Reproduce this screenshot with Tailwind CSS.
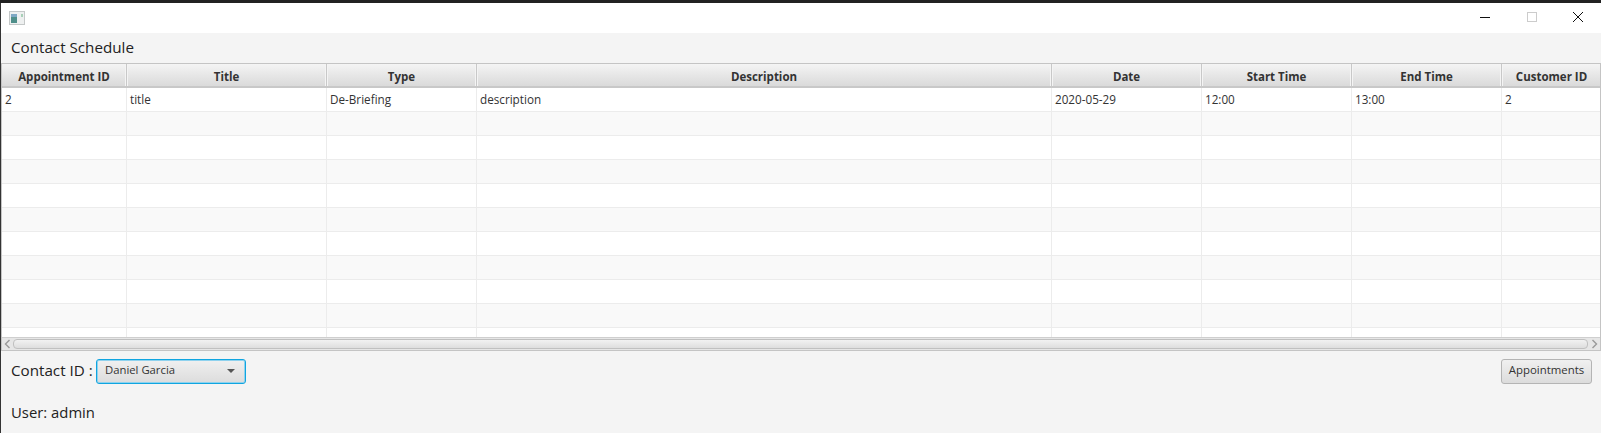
<!DOCTYPE html>
<html>
<head>
<meta charset="utf-8">
<script src="https://cdn.jsdelivr.net/npm/@tailwindcss/browser@4"></script>
</head>
<body class="w-[1601px] h-[433px] overflow-hidden bg-[#f4f4f4] font-['Open_Sans','Noto_Sans',sans-serif] text-[#333]">
<div class="h-[3px] bg-[#222]"></div>
<div class="border-l border-[#333] h-[430px] flex flex-col">
  <!-- title bar -->
  <div class="h-[30px] bg-white flex items-center justify-between shrink-0">
    <svg class="ml-[8px] w-[16px] h-[14px]" viewBox="0 0 16 14">
      <rect x="0.5" y="0.5" width="15" height="13" fill="#eef0f0" stroke="#c4c8c8"/>
      <rect x="2" y="3" width="6" height="9" fill="#4f8f8a"/>
      <rect x="2" y="3" width="6" height="3" fill="#7fa8c4"/>
      <rect x="12" y="3" width="2" height="3" fill="#a8d0b8"/>
    </svg>
    <div class="flex items-center">
      <svg class="w-[46px] h-[30px]" viewBox="0 0 46 30"><path d="M18 14.5h10" stroke="#111" stroke-width="1"/></svg>
      <svg class="w-[46px] h-[30px] ml-[1px]" viewBox="0 0 46 30"><rect x="18.5" y="9.5" width="9" height="9" fill="none" stroke="#ccc"/></svg>
      <svg class="w-[46px] h-[30px]" viewBox="0 0 46 30"><path d="M18 9l10 10M28 9l-10 10" stroke="#111" stroke-width="1" fill="none"/></svg>
    </div>
  </div>
  <!-- heading -->
  <div class="h-[30px] flex items-center pb-[2px] pl-[10px] text-[15.2px] text-[#222] shrink-0">Contact Schedule</div>
  <!-- table -->
  <div class="h-[288px] border border-[#c4c4c4] flex flex-col overflow-hidden shrink-0 bg-white">
    <div class="flex h-[24px] shrink-0 border-b-2 border-[#c8c8c8] bg-gradient-to-b from-[#f4f4f4] to-[#dadada] text-[11.5px] font-bold text-[#333]">
      <div class="w-[125px] pt-[3px] border-r border-[#c8c8c8] shadow-[inset_-1px_0_0_#f4f4f4] flex items-center justify-center">Appointment ID</div>
      <div class="w-[200px] pt-[3px] border-r border-[#c8c8c8] shadow-[inset_1px_0_0_#f4f4f4,inset_-1px_0_0_#f4f4f4] flex items-center justify-center">Title</div>
      <div class="w-[150px] pt-[3px] border-r border-[#c8c8c8] shadow-[inset_1px_0_0_#f4f4f4,inset_-1px_0_0_#f4f4f4] flex items-center justify-center">Type</div>
      <div class="w-[575px] pt-[3px] border-r border-[#c8c8c8] shadow-[inset_1px_0_0_#f4f4f4,inset_-1px_0_0_#f4f4f4] flex items-center justify-center">Description</div>
      <div class="w-[150px] pt-[3px] border-r border-[#c8c8c8] shadow-[inset_1px_0_0_#f4f4f4,inset_-1px_0_0_#f4f4f4] flex items-center justify-center">Date</div>
      <div class="w-[150px] pt-[3px] border-r border-[#c8c8c8] shadow-[inset_1px_0_0_#f4f4f4,inset_-1px_0_0_#f4f4f4] flex items-center justify-center">Start Time</div>
      <div class="w-[150px] pt-[3px] border-r border-[#c8c8c8] shadow-[inset_1px_0_0_#f4f4f4,inset_-1px_0_0_#f4f4f4] flex items-center justify-center">End Time</div>
      <div class="flex-1 pt-[3px] pl-[1px] shadow-[inset_1px_0_0_#f4f4f4] flex items-center justify-center">Customer ID</div>
    </div>
    <div class="flex-1 overflow-hidden text-[11.7px] text-[#333]">
      <div class="flex h-[24px] border-b border-[#ececec] bg-white">
        <div class="w-[125px] border-r border-[#ececec] pl-[3px] leading-[23px]">2</div>
        <div class="w-[200px] border-r border-[#ececec] pl-[3px] leading-[23px]">title</div>
        <div class="w-[150px] border-r border-[#ececec] pl-[3px] leading-[23px]">De-Briefing</div>
        <div class="w-[575px] border-r border-[#ececec] pl-[3px] leading-[23px]">description</div>
        <div class="w-[150px] border-r border-[#ececec] pl-[3px] leading-[23px]">2020-05-29</div>
        <div class="w-[150px] border-r border-[#ececec] pl-[3px] leading-[23px]">12:00</div>
        <div class="w-[150px] border-r border-[#ececec] pl-[3px] leading-[23px]">13:00</div>
        <div class="flex-1 pl-[3px] leading-[23px]">2</div>
      </div>
      <div class="flex h-[24px] border-b border-[#ececec] bg-[#f9f9f9]"><div class="w-[125px] border-r border-[#ececec]"></div><div class="w-[200px] border-r border-[#ececec]"></div><div class="w-[150px] border-r border-[#ececec]"></div><div class="w-[575px] border-r border-[#ececec]"></div><div class="w-[150px] border-r border-[#ececec]"></div><div class="w-[150px] border-r border-[#ececec]"></div><div class="w-[150px] border-r border-[#ececec]"></div></div>
      <div class="flex h-[24px] border-b border-[#ececec] bg-white"><div class="w-[125px] border-r border-[#ececec]"></div><div class="w-[200px] border-r border-[#ececec]"></div><div class="w-[150px] border-r border-[#ececec]"></div><div class="w-[575px] border-r border-[#ececec]"></div><div class="w-[150px] border-r border-[#ececec]"></div><div class="w-[150px] border-r border-[#ececec]"></div><div class="w-[150px] border-r border-[#ececec]"></div></div>
      <div class="flex h-[24px] border-b border-[#ececec] bg-[#f9f9f9]"><div class="w-[125px] border-r border-[#ececec]"></div><div class="w-[200px] border-r border-[#ececec]"></div><div class="w-[150px] border-r border-[#ececec]"></div><div class="w-[575px] border-r border-[#ececec]"></div><div class="w-[150px] border-r border-[#ececec]"></div><div class="w-[150px] border-r border-[#ececec]"></div><div class="w-[150px] border-r border-[#ececec]"></div></div>
      <div class="flex h-[24px] border-b border-[#ececec] bg-white"><div class="w-[125px] border-r border-[#ececec]"></div><div class="w-[200px] border-r border-[#ececec]"></div><div class="w-[150px] border-r border-[#ececec]"></div><div class="w-[575px] border-r border-[#ececec]"></div><div class="w-[150px] border-r border-[#ececec]"></div><div class="w-[150px] border-r border-[#ececec]"></div><div class="w-[150px] border-r border-[#ececec]"></div></div>
      <div class="flex h-[24px] border-b border-[#ececec] bg-[#f9f9f9]"><div class="w-[125px] border-r border-[#ececec]"></div><div class="w-[200px] border-r border-[#ececec]"></div><div class="w-[150px] border-r border-[#ececec]"></div><div class="w-[575px] border-r border-[#ececec]"></div><div class="w-[150px] border-r border-[#ececec]"></div><div class="w-[150px] border-r border-[#ececec]"></div><div class="w-[150px] border-r border-[#ececec]"></div></div>
      <div class="flex h-[24px] border-b border-[#ececec] bg-white"><div class="w-[125px] border-r border-[#ececec]"></div><div class="w-[200px] border-r border-[#ececec]"></div><div class="w-[150px] border-r border-[#ececec]"></div><div class="w-[575px] border-r border-[#ececec]"></div><div class="w-[150px] border-r border-[#ececec]"></div><div class="w-[150px] border-r border-[#ececec]"></div><div class="w-[150px] border-r border-[#ececec]"></div></div>
      <div class="flex h-[24px] border-b border-[#ececec] bg-[#f9f9f9]"><div class="w-[125px] border-r border-[#ececec]"></div><div class="w-[200px] border-r border-[#ececec]"></div><div class="w-[150px] border-r border-[#ececec]"></div><div class="w-[575px] border-r border-[#ececec]"></div><div class="w-[150px] border-r border-[#ececec]"></div><div class="w-[150px] border-r border-[#ececec]"></div><div class="w-[150px] border-r border-[#ececec]"></div></div>
      <div class="flex h-[24px] border-b border-[#ececec] bg-white"><div class="w-[125px] border-r border-[#ececec]"></div><div class="w-[200px] border-r border-[#ececec]"></div><div class="w-[150px] border-r border-[#ececec]"></div><div class="w-[575px] border-r border-[#ececec]"></div><div class="w-[150px] border-r border-[#ececec]"></div><div class="w-[150px] border-r border-[#ececec]"></div><div class="w-[150px] border-r border-[#ececec]"></div></div>
      <div class="flex h-[24px] border-b border-[#ececec] bg-[#f9f9f9]"><div class="w-[125px] border-r border-[#ececec]"></div><div class="w-[200px] border-r border-[#ececec]"></div><div class="w-[150px] border-r border-[#ececec]"></div><div class="w-[575px] border-r border-[#ececec]"></div><div class="w-[150px] border-r border-[#ececec]"></div><div class="w-[150px] border-r border-[#ececec]"></div><div class="w-[150px] border-r border-[#ececec]"></div></div>
      <div class="flex h-[24px] bg-white"><div class="w-[125px] border-r border-[#ececec]"></div><div class="w-[200px] border-r border-[#ececec]"></div><div class="w-[150px] border-r border-[#ececec]"></div><div class="w-[575px] border-r border-[#ececec]"></div><div class="w-[150px] border-r border-[#ececec]"></div><div class="w-[150px] border-r border-[#ececec]"></div><div class="w-[150px] border-r border-[#ececec]"></div></div>
    </div>
    <!-- horizontal scrollbar -->
    <div class="h-[13px] shrink-0 bg-[#e6e6e6] border-t border-[#cfcfcf] flex items-center">
      <svg class="w-[11px] h-[12px] shrink-0" viewBox="0 0 11 12"><path d="M7.5 2L3.5 6l4 4" fill="none" stroke="#999" stroke-width="1.4"/></svg>
      <div class="flex-1 h-[10px] rounded-[4px] border border-[#c0c0c0] bg-gradient-to-b from-[#f2f2f2] to-[#dedede]"></div>
      <svg class="w-[12px] h-[12px] shrink-0" viewBox="0 0 12 12"><path d="M4.5 2l4 4-4 4" fill="none" stroke="#999" stroke-width="1.4"/></svg>
    </div>
  </div>
  <!-- bottom controls -->
  <div class="flex items-center justify-between mt-[7px] pl-[10px] pr-[9px] h-[26px] shrink-0">
    <div class="flex items-center">
      <span class="w-[85px] pb-[2px] text-[15.2px] text-[#222]">Contact ID :</span>
      <div class="w-[150px] h-[25px] pb-[2px] rounded-[3px] border border-[#10a5e0] shadow-[inset_0_0_0_1px_#8fd2ee] bg-gradient-to-b from-[#f0f0f0] to-[#dcdcdc] flex items-center justify-between pl-[8px] pr-[10px] text-[11.3px]">
        <span>Daniel Garcia</span>
        <svg class="w-[8px] h-[4px] mt-[2px]" viewBox="0 0 8 4"><path d="M0 0h8L4 4z" fill="#555"/></svg>
      </div>
    </div>
    <div class="w-[91px] h-[25px] pb-[2px] rounded-[3px] border border-[#b4b4b4] bg-gradient-to-b from-[#f0f0f0] to-[#dcdcdc] flex items-center justify-center text-[11.4px]">Appointments</div>
  </div>
  <div class="pl-[10px] mt-[16px] text-[14.85px] text-[#222] leading-[24px]">User: admin</div>
</div>
</body>
</html>
